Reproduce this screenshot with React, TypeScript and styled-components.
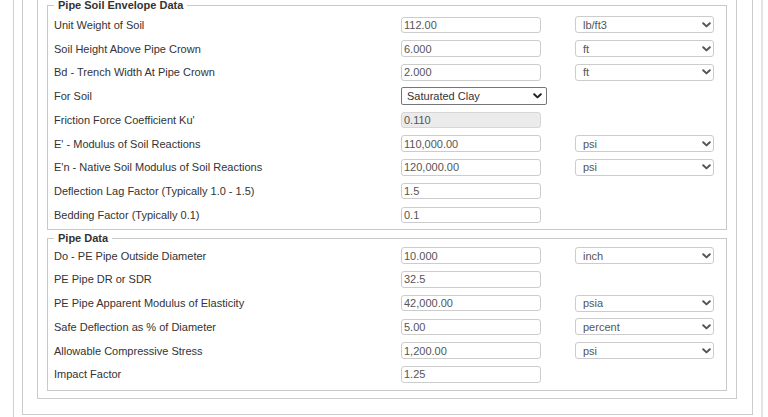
import React from "react";
import styled, { createGlobalStyle } from "styled-components";

const GlobalStyle = createGlobalStyle`
  html, body { margin: 0; padding: 0; background: #fff; }
  body { font-family: "Liberation Sans", Arial, sans-serif; color: #333; overflow: hidden; }
`;

const OuterPanel = styled.div`
  margin: 0 5px 0 13px;
  border-left: 1px solid #cfcfcf;
  border-right: 2px solid #e4e4e4;
  padding: 0 8px 40px 8px;
`;

const SectionBox = styled.div<{ $pl: number; $pr: number; $pb: number }>`
  border: 1px solid #cccccc;
  border-top: none;
  padding: 0 ${(p) => p.$pr}px ${(p) => p.$pb}px ${(p) => p.$pl}px;
`;

const FieldSet = styled.fieldset<{ $gap?: boolean; $pt: number; $pb: number }>`
  margin: ${(p) => (p.$gap ? "3px" : "0")} 0 0 0;
  border: 1px solid #c9c9c9;
  padding: ${(p) => p.$pt}px 11px ${(p) => p.$pb}px 6px;
  min-width: 0;
`;

const Legend = styled.legend`
  font-size: 11px;
  font-weight: bold;
  line-height: 10px;
  color: #333;
  padding: 0 4px;
  margin-left: 0;
`;

const Row = styled.div`
  display: grid;
  grid-template-columns: 319px 146px 139px;
  column-gap: 28px;
  align-items: center;
  height: 23.75px;
`;

const Label = styled.span`
  font-size: 11px;
  color: #333;
  white-space: nowrap;
`;

const TextInput = styled.input<{ $readOnly?: boolean }>`
  box-sizing: border-box;
  width: 140px;
  height: 16.5px;
  border: 1px solid ${(p) => (p.$readOnly ? "#d6d6d6" : "#cccccc")};
  border-radius: 3px;
  background: ${(p) => (p.$readOnly ? "#ebebeb" : "#fff")};
  font-family: "Liberation Sans", Arial, sans-serif;
  font-size: 11px;
  color: #555;
  padding: 0 2px;
  margin: 0;
  outline: none;
`;

const SelectWrap = styled.div<{ $w: number }>`
  position: relative;
  width: ${(p) => p.$w}px;
  display: flex;
  align-items: center;
`;

const UnitSelect = styled.select`
  appearance: none;
  -webkit-appearance: none;
  box-sizing: border-box;
  width: 139px;
  height: 17px;
  border: 1px solid #cccccc;
  border-radius: 3px;
  background: #fff;
  font-family: "Liberation Sans", Arial, sans-serif;
  font-size: 11px;
  color: #555;
  padding: 0 0 0 7px;
  margin: 0;
  outline: none;
`;

const SoilSelect = styled.select`
  appearance: none;
  -webkit-appearance: none;
  box-sizing: border-box;
  width: 146px;
  height: 18px;
  border: 1px solid #767676;
  border-radius: 2px;
  background: #fff;
  font-family: "Liberation Sans", Arial, sans-serif;
  font-size: 11px;
  color: #333;
  padding: 0 0 0 5px;
  margin: 0;
  outline: none;
`;

const Chevron = styled.svg<{ $right: number }>`
  position: absolute;
  right: ${(p) => p.$right}px;
  top: 50%;
  transform: translateY(-50%);
  pointer-events: none;
`;

const ChevronIcon: React.FC<{ right: number; color: string }> = ({ right, color }) => (
  <Chevron $right={right} width="9" height="6" viewBox="0 0 9 6">
    <path d="M1.2 1.2 L4.5 4.4 L7.8 1.2" fill="none" stroke={color} strokeWidth="2" strokeLinecap="round" strokeLinejoin="round" />
  </Chevron>
);

type RowDef = {
  label: string;
  value?: string;
  unit?: string;
  units?: string[];
  readOnly?: boolean;
  soil?: boolean;
};

const soilRows: RowDef[] = [
  { label: "Unit Weight of Soil", value: "112.00", unit: "lb/ft3", units: ["lb/ft3", "kg/m3"] },
  { label: "Soil Height Above Pipe Crown", value: "6.000", unit: "ft", units: ["ft", "m"] },
  { label: "Bd - Trench Width At Pipe Crown", value: "2.000", unit: "ft", units: ["ft", "m"] },
  { label: "For Soil", soil: true },
  { label: "Friction Force Coefficient Ku'", value: "0.110", readOnly: true },
  { label: "E' - Modulus of Soil Reactions", value: "110,000.00", unit: "psi", units: ["psi", "kPa"] },
  { label: "E'n - Native Soil Modulus of Soil Reactions", value: "120,000.00", unit: "psi", units: ["psi", "kPa"] },
  { label: "Deflection Lag Factor (Typically 1.0 - 1.5)", value: "1.5" },
  { label: "Bedding Factor (Typically 0.1)", value: "0.1" },
];

const pipeRows: RowDef[] = [
  { label: "Do - PE Pipe Outside Diameter", value: "10.000", unit: "inch", units: ["inch", "mm"] },
  { label: "PE Pipe DR or SDR", value: "32.5" },
  { label: "PE Pipe Apparent Modulus of Elasticity", value: "42,000.00", unit: "psia", units: ["psia", "MPa"] },
  { label: "Safe Deflection as % of Diameter", value: "5.00", unit: "percent", units: ["percent"] },
  { label: "Allowable Compressive Stress", value: "1,200.00", unit: "psi", units: ["psi", "kPa"] },
  { label: "Impact Factor", value: "1.25" },
];

const FormRow: React.FC<{ row: RowDef }> = ({ row }) => (
  <Row>
    <Label>{row.label}</Label>
    {row.soil ? (
      <SelectWrap $w={146}>
        <SoilSelect defaultValue="Saturated Clay">
          <option>Granular</option>
          <option>Sand and Gravel</option>
          <option>Saturated Top Soil</option>
          <option>Ordinary Clay</option>
          <option>Saturated Clay</option>
        </SoilSelect>
        <ChevronIcon right={5} color="#222" />
      </SelectWrap>
    ) : (
      <TextInput
        type="text"
        defaultValue={row.value}
        readOnly={row.readOnly}
        $readOnly={row.readOnly}
      />
    )}
    {row.unit ? (
      <SelectWrap $w={139}>
        <UnitSelect defaultValue={row.unit}>
          {row.units!.map((u) => (
            <option key={u}>{u}</option>
          ))}
        </UnitSelect>
        <ChevronIcon right={3} color="#555" />
      </SelectWrap>
    ) : (
      <span />
    )}
  </Row>
);

export default function App() {
  return (
    <>
      <GlobalStyle />
      <OuterPanel>
        <SectionBox $pl={14} $pr={15} $pb={15}>
          <SectionBox $pl={9} $pr={9} $pb={7}>
            <FieldSet $pt={3} $pb={2.5}>
              <Legend>Pipe Soil Envelope Data</Legend>
              {soilRows.map((r) => (
                <FormRow key={r.label} row={r} />
              ))}
            </FieldSet>
            <FieldSet $gap $pt={0.5} $pb={4}>
              <Legend>Pipe Data</Legend>
              {pipeRows.map((r) => (
                <FormRow key={r.label} row={r} />
              ))}
            </FieldSet>
          </SectionBox>
        </SectionBox>
      </OuterPanel>
    </>
  );
}
